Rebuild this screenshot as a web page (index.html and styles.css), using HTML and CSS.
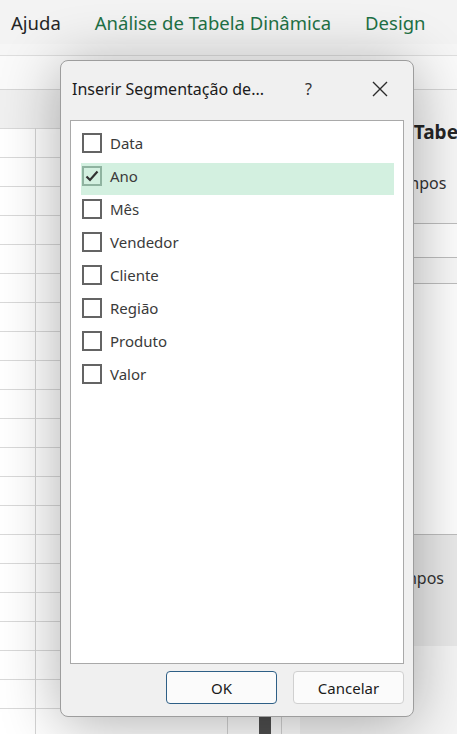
FILE: index.html
```html
<!DOCTYPE html>
<html lang="pt">
<head>
    <meta charset="UTF-8">
    <meta name="viewport" content="width=device-width, initial-scale=1.0">
    <title>Inserir Segmentação de Dados</title>
    <link rel="stylesheet" href="styles.css">
</head>
<body>
    <header class="ribbon">
        <span class="tab">Ajuda</span>
        <span class="tab tab-green">Análise de Tabela Dinâmica</span>
        <span class="tab tab-green">Design</span>
    </header>
    <div class="toolbar"></div>
    <div class="formula-bar"></div>

    <div class="workspace">
        <div class="sheet"></div>
        <aside class="pane">
            <h2 class="pane-title">Campos da Tabela Dinâmica</h2>
            <p class="pane-hint">Escolha os campos</p>
            <div class="pane-search"></div>
            <div class="pane-list"></div>
            <div class="pane-areas">
                <p class="pane-hint">Arraste os campos</p>
            </div>
            <div class="pane-bottom"></div>
        </aside>
    </div>

    <div class="dialog">
        <div class="dialog-title">
            <span class="dialog-caption">Inserir Segmentação de...</span>
            <span class="dialog-help">?</span>
            <svg class="dialog-close" width="16" height="16" viewBox="0 0 16 16">
                <path d="M1 1 L15 15 M15 1 L1 15" stroke="#2b2b2b" stroke-width="1.4" fill="none"/>
            </svg>
        </div>
        <div class="field-box">
            <label class="field"><span class="check"></span>Data</label>
            <label class="field selected"><span class="check checked">
                <svg width="16" height="16" viewBox="0 0 16 16"><path d="M2.5 8.5 L6 12 L13.5 3.5" stroke="#333" stroke-width="2.2" fill="none"/></svg>
            </span>Ano</label>
            <label class="field"><span class="check"></span>Mês</label>
            <label class="field"><span class="check"></span>Vendedor</label>
            <label class="field"><span class="check"></span>Cliente</label>
            <label class="field"><span class="check"></span>Região</label>
            <label class="field"><span class="check"></span>Produto</label>
            <label class="field"><span class="check"></span>Valor</label>
        </div>
        <div class="dialog-buttons">
            <button class="btn btn-default">OK</button>
            <button class="btn">Cancelar</button>
        </div>
    </div>
</body>
</html>
```

FILE: styles.css
```css
body {
    margin: 0;
    width: 457px;
    height: 734px;
    overflow: hidden;
    position: relative;
    font-family: "Noto Sans", "Open Sans", sans-serif;
    background-color: #f3f3f3;
    color: #262626;
}
.ribbon {
    height: 44px;
    display: flex;
    align-items: center;
    gap: 34px;
    padding-left: 11px;
    background-color: #f3f3f3;
    box-sizing: border-box;
}
.tab {
    font-size: 18.5px;
    color: #262626;
}
.tab-green {
    color: #1e7145;
}
.toolbar {
    height: 11px;
    background-color: #f6f6f6;
    border-bottom: 1px solid #dedede;
}
.formula-bar {
    height: 33px;
    background-color: #fafafa;
    border-bottom: 1px solid #d6d6d6;
}
.workspace {
    display: flex;
    height: 644px;
}
.sheet {
    width: 300px;
    flex-shrink: 0;
    background-color: #fff;
    background-image:
        linear-gradient(#4f4f4f, #4f4f4f),
        linear-gradient(#d4d4d4, #d4d4d4),
        linear-gradient(#d4d4d4, #d4d4d4),
        linear-gradient(#f0f0f0, #f0f0f0),
        linear-gradient(90deg, transparent 35px, #d4d4d4 35px, #d4d4d4 36px, transparent 36px),
        repeating-linear-gradient(180deg, transparent 0, transparent 28px, #d9d9d9 28px, #d9d9d9 29px);
    background-size: 12px 20px, 1px 20px, 1px 20px, 100% 38px, 100% 100%, 100% 100%;
    background-position: 259px 100%, 227px 100%, 281px 100%, 0 0, 0 0, 0 10px;
    background-repeat: no-repeat, no-repeat, no-repeat, no-repeat, no-repeat, repeat;
}
.pane {
    flex: 1;
    min-width: 0;
    overflow: hidden;
    background-color: #f7f7f7;
    display: flex;
    flex-direction: column;
    padding-left: 5px;
}
.pane-title {
    margin: 29px 0 0;
    font-size: 19px;
    font-weight: bold;
    white-space: nowrap;
    color: #262626;
}
.pane-hint {
    margin: 27px 0 0 0;
    font-size: 16px;
    white-space: nowrap;
    color: #333;
}
.pane-search {
    margin: 29px 0 0 -5px;
    height: 33px;
    border-top: 1px solid #bdbdbd;
    border-bottom: 1px solid #bdbdbd;
    background-color: #fdfdfd;
}
.pane-list {
    margin: 25px 0 0 -5px;
    height: 250px;
    border-top: 1px solid #bdbdbd;
    border-bottom: 1px solid #bdbdbd;
    background-color: #fdfdfd;
}
.pane-areas {
    margin-left: -5px;
    padding-left: 5px;
    height: 111px;
    background-color: #e9e9e9;
}
.pane-areas .pane-hint {
    margin-top: 32px;
}
.pane-bottom {
    margin-left: -5px;
    flex: 1;
    background-color: #f5f5f5;
}
.dialog {
    position: absolute;
    left: 60px;
    top: 60px;
    width: 354px;
    height: 657px;
    box-sizing: border-box;
    background-color: #f0f0f0;
    border: 1px solid #9d9d9d;
    border-radius: 8px;
    box-shadow: 0 6px 60px rgba(0, 0, 0, 0.32);
    padding: 0 9px;
    display: flex;
    flex-direction: column;
}
.dialog-title {
    height: 59px;
    display: flex;
    align-items: center;
    padding-left: 2px;
    padding-bottom: 4px;
    box-sizing: border-box;
}
.dialog-caption {
    font-size: 16px;
    color: #1b1b1b;
    width: 233px;
}
.dialog-help {
    font-size: 16px;
    color: #333;
}
.dialog-close {
    margin-left: 60px;
}
.field-box {
    height: 544px;
    box-sizing: border-box;
    background-color: #fff;
    border: 1px solid #a9a9a9;
    padding: 9px 9px 0 10px;
}
.field {
    height: 32px;
    margin-bottom: 1px;
    box-sizing: border-box;
    padding: 0 0 6px 1px;
    display: flex;
    align-items: center;
    gap: 8px;
    font-size: 15px;
    color: #3a3a3a;
}
.field.selected {
    background-color: #d3f0e0;
}
.check {
    width: 20px;
    height: 20px;
    box-sizing: border-box;
    border: 2px solid #646464;
    display: flex;
    align-items: center;
    justify-content: center;
}
.check.checked {
    border-color: #8fb3a0;
}
.dialog-buttons {
    display: flex;
    justify-content: flex-end;
    gap: 16px;
    margin-top: 7px;
}
.btn {
    width: 111px;
    height: 33px;
    border: 1px solid #d0d0d0;
    border-radius: 4px;
    background-color: #fbfbfb;
    font-family: "Noto Sans", "Open Sans", sans-serif;
    font-size: 15px;
    color: #1b1b1b;
}
.btn-default {
    border-color: #2e5f86;
}
```
